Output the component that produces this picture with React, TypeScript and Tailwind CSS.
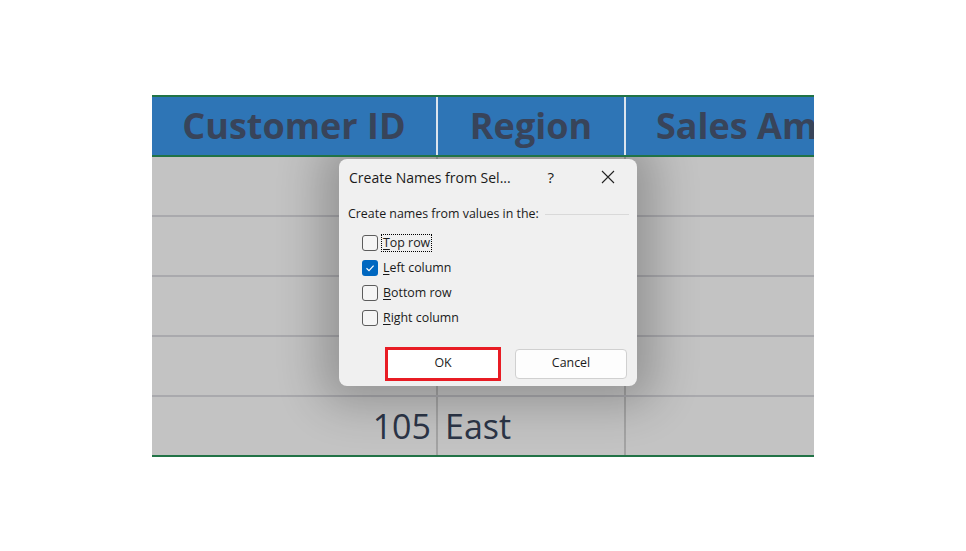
import React from 'react';

const rows = [
  { id: '', region: '' },
  { id: '', region: '' },
  { id: '', region: '' },
  { id: '', region: '' },
  { id: '105', region: 'East' },
];

const options = [
  { key: 'T', rest: 'op row', checked: false, focus: true },
  { key: 'L', rest: 'eft column', checked: true, focus: false },
  { key: 'B', rest: 'ottom row', checked: false, focus: false },
  { key: 'R', rest: 'ight column', checked: false, focus: false },
];

export default function App() {
  return (
    <div className="w-[966px] h-[551px] bg-white overflow-hidden" style={{ fontFamily: '"Open Sans", "Noto Sans", sans-serif' }}>
      <div className="ml-[152px] mt-[95px] w-[662px] border-t-2 border-[#217346]">
        {/* Header */}
        <div className="flex h-[60px] bg-[#2e75b6] text-[#38445a] font-bold text-[36px] border-b-2 border-[#217346]">
          <div className="w-[286px] flex items-center justify-center border-r-2 border-[#dbe4ee]">Customer ID</div>
          <div className="w-[188px] flex items-center justify-center border-r-2 border-[#dbe4ee]">Region</div>
          <div className="w-[188px] flex items-center pl-[30px] whitespace-nowrap overflow-hidden">Sales Am</div>
        </div>

        {/* Body */}
        <div className="relative overflow-hidden bg-[#c3c3c3]">
          {rows.map((r, i) => (
            <div
              key={i}
              className={`flex h-[60px] border-b-2 text-[34px] text-[#2c3547] ${i === rows.length - 1 ? 'border-[#217346]' : 'border-[#a9a9ad]'}`}
            >
              <div className="w-[286px] flex items-center justify-end pr-[5px] border-r-2 border-[#a3a3a3]">{r.id}</div>
              <div className="w-[188px] flex items-center pl-[7px] border-r-2 border-[#a3a3a3]">{r.region}</div>
              <div className="flex-1" />
            </div>
          ))}

          {/* Dialog */}
          <div className="absolute left-[187px] top-[2px] w-[298px] h-[227px] rounded-[8px] bg-[#f0f0f0] shadow-[0_0_45px_18px_rgba(0,0,0,0.24)] text-[#1a1a1a]">
            <div className="flex items-center h-[36px] pl-[10px] pr-[22px]">
              <span className="text-[14px] flex-1">Create Names from Sel...</span>
              <span className="text-[15px] mr-[47px]">?</span>
              <svg width="14" height="14" viewBox="0 0 14 14" className="text-[#222]">
                <path d="M1 1 L13 13 M13 1 L1 13" stroke="currentColor" strokeWidth="1.1" fill="none" />
              </svg>
            </div>
            <div className="flex items-center mt-[10px] pl-[9px] pr-[8px]">
              <span className="text-[12.4px] whitespace-nowrap">Create names from values in the:</span>
              <div className="flex-1 h-px bg-[#d9d9d9] ml-[6px]" />
            </div>
            <div className="flex flex-col gap-[9px] mt-[11px] pl-[23px]">
              {options.map((o) => (
                <div key={o.key} className="flex items-center h-[16px]">
                  {o.checked ? (
                    <div className="w-[16px] h-[16px] rounded-[3px] bg-[#0067c0] flex items-center justify-center">
                      <svg width="10" height="10" viewBox="0 0 10 10">
                        <path d="M1.5 5.2 L4 7.6 L8.6 2.6" stroke="white" strokeWidth="1.2" fill="none" />
                      </svg>
                    </div>
                  ) : (
                    <div className="w-[16px] h-[16px] rounded-[3px] border border-[#5c5c5c] bg-[#f5f5f5]" />
                  )}
                  <span
                    className={`ml-[4px] text-[12.4px] leading-[16px] px-[1px] ${o.focus ? 'outline outline-1 outline-dotted outline-black' : ''}`}
                  >
                    <span className="underline underline-offset-2">{o.key}</span>
                    {o.rest}
                  </span>
                </div>
              ))}
            </div>
            <div className="flex items-center mt-[21px] pl-[46px] gap-[14px]">
              <div className="w-[116px] h-[34px] border-[3px] border-[#e81c24] bg-white flex items-center justify-center text-[12.4px]">OK</div>
              <div className="w-[112px] h-[30px] rounded-[4px] border border-[#d0d0d0] bg-[#fdfdfd] flex items-center justify-center text-[12.4px]">Cancel</div>
            </div>
          </div>
        </div>
      </div>
    </div>
  );
}
